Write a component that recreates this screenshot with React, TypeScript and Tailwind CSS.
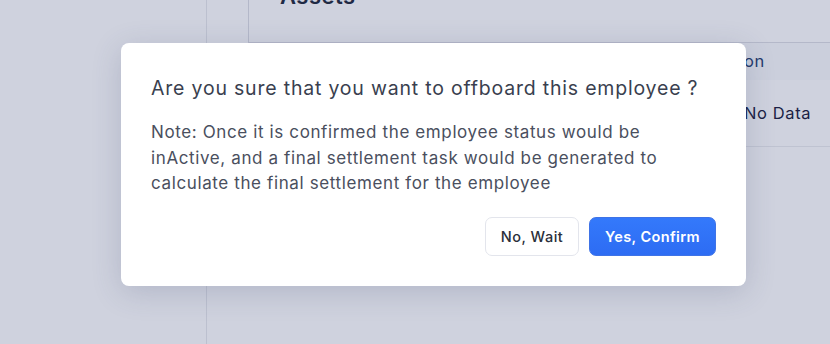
import React from "react";

export default function App() {
  return (
    <div className="relative w-[830px] h-[344px] overflow-hidden bg-[#cfd2de]" style={{ fontFamily: "Inter, 'Noto Sans', sans-serif" }}>
      {/* background page */}
      <div className="absolute inset-0 flex">
        <div className="w-[207px] h-full border-r border-[#bcc0cf]" />
        <div className="w-[41px] h-full" />
        <div className="flex-1 flex flex-col">
          <div className="h-[43px] border-l border-b border-[#b4b8c9] relative">
            <div className="absolute left-[31px] top-[-20px] text-[22px] font-semibold tracking-[0.5px] text-[#1f2a44]">Assets</div>
          </div>
          <div className="h-[37px] bg-[#cbcfdc] flex items-center text-[16.5px] tracking-[0.6px] text-[#243a6b]">
            <span className="ml-[496px]">on</span>
          </div>
          <div className="h-[67px] border-b border-[#bfc3d1] flex items-center text-[16.5px] tracking-[0.6px] text-[#1b1f45]">
            <span className="ml-[496px]">No Data</span>
          </div>
        </div>
      </div>

      {/* modal */}
      <div className="absolute left-[121px] top-[43px] w-[625px] h-[243px] bg-white rounded-[8px] shadow-[0_6px_30px_rgba(60,70,110,0.2)] pl-[30px] pr-[30px] pt-[32px] pb-[30px] flex flex-col">
        <h2 className="text-[19.5px] leading-[26px] tracking-[0.8px] text-[#3a3f4f] font-normal whitespace-nowrap">Are you sure that you want to offboard this employee ?</h2>
        <p className="mt-[19px] text-[17px] leading-[25.5px] tracking-[0.62px] text-[#4a4f5e] pr-[40px]">
          Note: Once it is confirmed the employee status would be<br />inActive, and a final settlement task would be generated to<br />calculate the final settlement for the employee
        </p>
        <div className="mt-auto flex justify-end gap-[10px]">
          <button className="h-[39px] w-[94px] rounded-[7px] border border-[#e3e5ec] bg-white text-[14.5px] tracking-[0.5px] font-medium text-[#2b2f3a]">No, Wait</button>
          <button className="h-[39px] w-[127px] rounded-[7px] border border-[#3f73e6] bg-gradient-to-b from-[#3479fb] to-[#2d6cf3] text-[14.5px] tracking-[0.4px] font-semibold text-white">Yes, Confirm</button>
        </div>
      </div>
    </div>
  );
}
